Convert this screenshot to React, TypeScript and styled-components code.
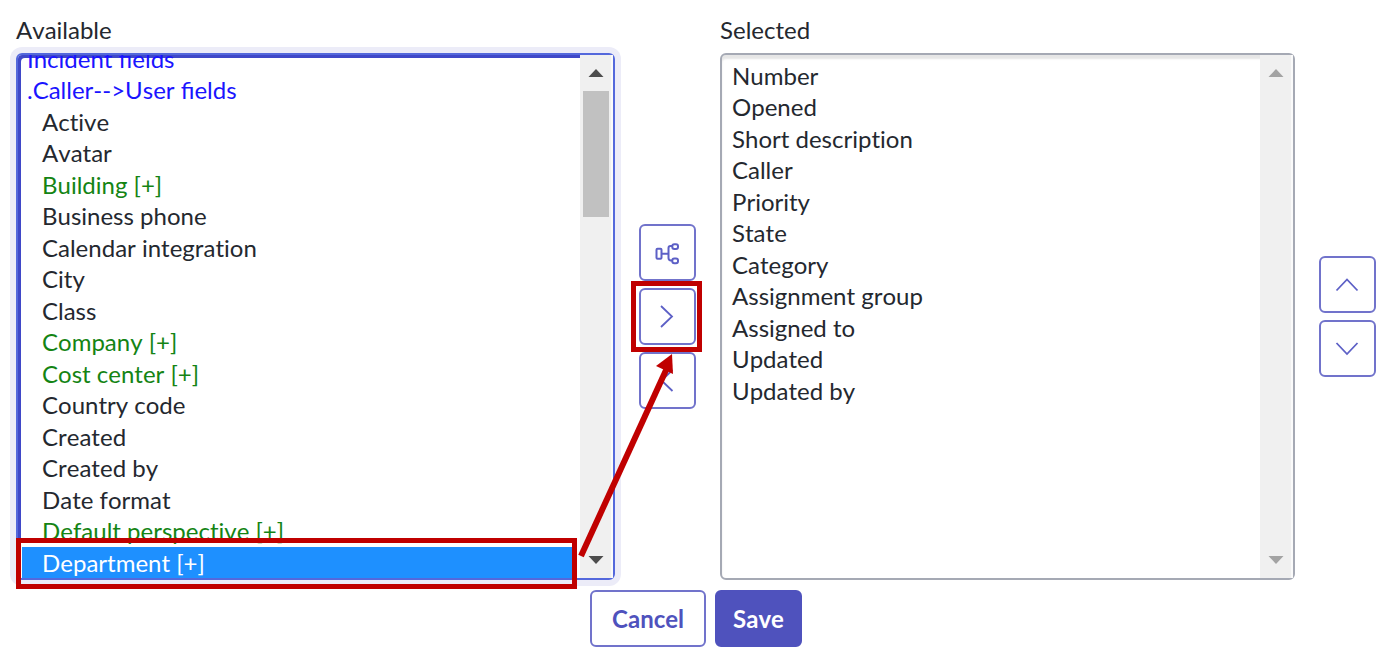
import React, { useLayoutEffect, useRef } from "react";
import styled, { createGlobalStyle, css } from "styled-components";

const GlobalStyle = createGlobalStyle`
  *, *::before, *::after { box-sizing: border-box; }
  body {
    margin: 0;
    background: #fff;
    color: #24282f;
    font-family: Lato, "Open Sans", sans-serif;
    font-size: 24px;
    font-kerning: none;
  }
`;

const ACCENT = "#4f52bd";
const MARK = "#c00000";

type Tone = "plain" | "group" | "reference";

interface Field {
  name: string;
  tone: Tone;
}

const plain = (name: string): Field => ({ name, tone: "plain" });
const reference = (name: string): Field => ({ name: `${name} [+]`, tone: "reference" });
const group = (name: string): Field => ({ name, tone: "group" });

const availableFields: Field[] = [
  group("Incident fields"),
  group(".Caller-->User fields"),
  plain("Active"),
  plain("Avatar"),
  reference("Building"),
  plain("Business phone"),
  plain("Calendar integration"),
  plain("City"),
  plain("Class"),
  reference("Company"),
  reference("Cost center"),
  plain("Country code"),
  plain("Created"),
  plain("Created by"),
  plain("Date format"),
  reference("Default perspective"),
  reference("Department"),
];

const selectedFields = [
  "Number",
  "Opened",
  "Short description",
  "Caller",
  "Priority",
  "State",
  "Category",
  "Assignment group",
  "Assigned to",
  "Updated",
  "Updated by",
];

const Page = styled.form`
  padding: 14px 7px 14px 16px;
`;

const Slushbucket = styled.div`
  display: grid;
  grid-template-columns: minmax(0, 599fr) 57px minmax(0, 575fr) 57px;
  grid-template-rows: 39px auto;
  column-gap: 24px;
`;

const Label = styled.label<{ $column: number }>`
  grid-column: ${(p) => p.$column};
  grid-row: 1;
  line-height: 32px;
`;

const ListBox = styled.div<{ $focused?: boolean }>`
  position: relative;
  grid-row: 2;
  display: flex;
  height: 527px;
  border: 2px solid #a5a9b4;
  border-radius: 6px;
  box-shadow: inset 0 4px 2px #e6e6e6;

  ${(p) =>
    p.$focused &&
    css`
      border-color: #5468dc;
      box-shadow: inset 3px 3px 0 #3f48c8, 0 0 0 6px #ececf8;
    `}
`;

const List = styled.select<{ $top: number; $left: number }>`
  flex: 1;
  min-width: 0;
  height: 100%;
  margin: 0;
  padding: ${(p) => p.$top}px 4px 0 ${(p) => p.$left}px;
  border: 0;
  outline: 0;
  background: transparent;
  color: inherit;
  font: inherit;
  font-kerning: inherit;
  overflow: hidden;
`;

const tones: Record<Tone, string> = {
  plain: "#24282f",
  group: "#1a14ff",
  reference: "#148414",
};

const Item = styled.option<{ $tone?: Tone; $indent: number }>`
  height: 31px;
  min-height: 31px;
  padding: 1px 0 0 ${(p) => p.$indent}px;
  color: ${(p) => tones[p.$tone ?? "plain"]};
  line-height: 30px;
  font-variant-ligatures: ${(p) => (p.$tone === "group" ? "normal" : "none")};

  &:nth-child(even) {
    height: 32px;
  }

  &:checked {
    background: #1e90ff linear-gradient(#1e90ff, #1e90ff);
    color: #fff;
    -webkit-text-fill-color: #fff;
  }
`;

const ScrollTrack = styled.div<{ $active?: boolean }>`
  display: flex;
  flex-direction: column;
  align-items: center;
  justify-content: space-between;
  width: 33px;
  padding: 14px 0 14px 1px;
  border-right: 2px solid #fafafa;
  background: #f0f0f0;
  color: ${(p) => (p.$active ? "#4d4d4d" : "#a3a3a3")};

  svg {
    display: block;
  }
`;

const ScrollThumb = styled.div`
  width: 26px;
  height: 126px;
  margin: 14px 0 auto;
  background: #c1c1c1;
`;

const Actions = styled.div<{ $column: number }>`
  position: relative;
  grid-column: ${(p) => p.$column};
  grid-row: 2;
  align-self: center;
  display: flex;
  flex-direction: column;
  gap: 7px;
`;

const IconButton = styled.button`
  position: relative;
  display: flex;
  align-items: center;
  justify-content: center;
  width: 57px;
  height: 57px;
  padding: 0;
  border: 2px solid #7173cb;
  border-radius: 6px;
  background: #fff;
  color: #5d60c6;
`;

const Footer = styled.div`
  display: flex;
  justify-content: center;
  gap: 9px;
  padding-top: 10px;
`;

const TextButton = styled.button<{ $primary?: boolean }>`
  height: 57px;
  padding: 0 ${(p) => (p.$primary ? 16 : 20)}px;
  border: 2px solid ${(p) => (p.$primary ? ACCENT : "#7173cb")};
  border-radius: 6px;
  background: ${(p) => (p.$primary ? ACCENT : "#fff")};
  color: ${(p) => (p.$primary ? "#fff" : ACCENT)};
  font: inherit;
  font-kerning: inherit;
  font-weight: 700;
`;

const RowMark = styled.div`
  position: absolute;
  right: 36px;
  bottom: -11px;
  left: -2px;
  height: 51px;
  border: 5px solid ${MARK};
  pointer-events: none;
`;

const ButtonMark = styled.div`
  position: absolute;
  inset: -9px -8px -9px -10px;
  border: 5px solid ${MARK};
  pointer-events: none;
`;

const ArrowMark = styled.svg`
  position: absolute;
  top: 128px;
  left: -64px;
  pointer-events: none;
`;

const chevrons = {
  right: "M8 4 19 14.500 8 25",
  left: "M19.500 4 8.500 14.500 19.500 25",
  up: "M3.500 20.500 14 9.500 24.500 20.500",
  down: "M3.500 9 14 20 24.500 9",
};

function Chevron({ to }: { to: keyof typeof chevrons }) {
  return (
    <svg width="30" height="30" viewBox="0 0 30 30" fill="none" aria-hidden="true">
      <path d={chevrons[to]} stroke="currentColor" strokeWidth="1.8" />
    </svg>
  );
}

function TreeIcon() {
  return (
    <svg width="26" height="26" viewBox="0 0 26 26" fill="none" stroke="currentColor" strokeWidth="2" aria-hidden="true">
      <rect x="1.500" y="8.800" width="5" height="10" rx="1" />
      <path d="M6.500 13.800h7M17.500 6h-2q-2 0-2 2v10q0 2 2 2.500h2" />
      <rect x="17.300" y="4.200" width="5.700" height="4.800" rx="2" />
      <rect x="17.300" y="18.400" width="5.700" height="4.800" rx="2" />
    </svg>
  );
}

function ScrollArrow({ down }: { down?: boolean }) {
  return (
    <svg width="16" height="8" viewBox="0 0 16 8" aria-hidden="true">
      <path d={down ? "M0.500 0h15L8 8z" : "M0.500 8h15L8 0z"} fill="currentColor" />
    </svg>
  );
}

function Scrollbar({ active }: { active?: boolean }) {
  return (
    <ScrollTrack $active={active} aria-hidden="true">
      <ScrollArrow />
      {active && <ScrollThumb />}
      <ScrollArrow down />
    </ScrollTrack>
  );
}

export default function App() {
  const available = useRef<HTMLSelectElement>(null);

  useLayoutEffect(() => {
    const list = available.current;
    if (list) list.scrollTop = list.scrollHeight;
  }, []);

  return (
    <>
      <GlobalStyle />
      <Page onSubmit={(event) => event.preventDefault()}>
        <Slushbucket>
          <Label $column={1} htmlFor="available">Available</Label>
          <ListBox $focused>
            <List id="available" ref={available} multiple size={17} $top={0} $left={4} defaultValue={["Department [+]"]}>
              {availableFields.map((field) => (
                <Item key={field.name} value={field.name} $tone={field.tone} $indent={field.tone === "group" ? 5 : 20}>
                  {field.name}
                </Item>
              ))}
            </List>
            <Scrollbar active />
            <RowMark />
          </ListBox>

          <Actions $column={2}>
            <IconButton type="button" aria-label="Expand selected reference field">
              <TreeIcon />
            </IconButton>
            <IconButton type="button" aria-label="Add">
              <Chevron to="right" />
              <ButtonMark />
            </IconButton>
            <IconButton type="button" aria-label="Remove">
              <Chevron to="left" />
            </IconButton>
            <ArrowMark width="106" height="210" viewBox="0 0 106 210" aria-hidden="true">
              <path d="M6 204 92 16" stroke={MARK} strokeWidth="6" />
              <path d="M97 2 81 14 98 22z" fill={MARK} />
            </ArrowMark>
          </Actions>

          <Label $column={3} htmlFor="selected">Selected</Label>
          <ListBox>
            <List id="selected" multiple size={17} $top={5} $left={0}>
              {selectedFields.map((name) => (
                <Item key={name} value={name} $indent={10}>
                  {name}
                </Item>
              ))}
            </List>
            <Scrollbar />
          </ListBox>

          <Actions $column={4}>
            <IconButton type="button" aria-label="Move up">
              <Chevron to="up" />
            </IconButton>
            <IconButton type="button" aria-label="Move down">
              <Chevron to="down" />
            </IconButton>
          </Actions>
        </Slushbucket>

        <Footer>
          <TextButton type="button">Cancel</TextButton>
          <TextButton type="submit" $primary>Save</TextButton>
        </Footer>
      </Page>
    </>
  );
}
